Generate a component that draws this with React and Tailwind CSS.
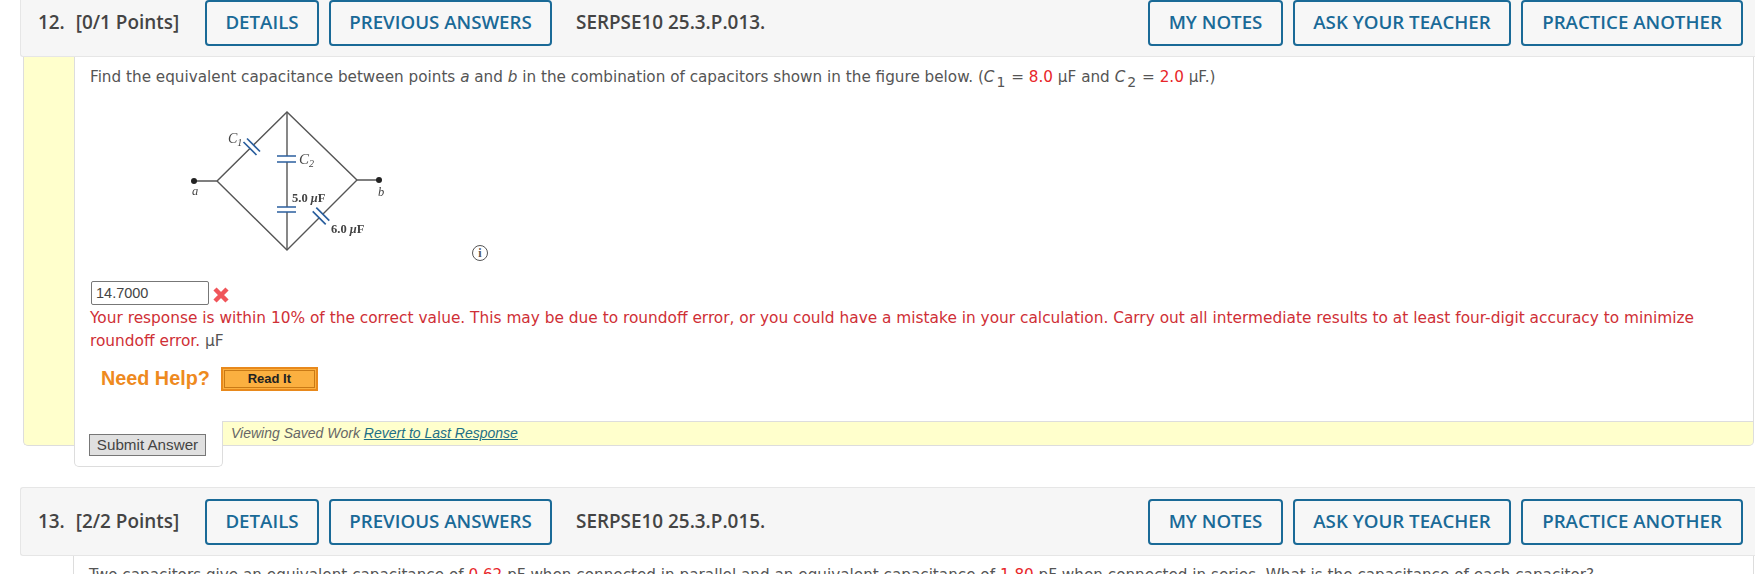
const btn = "h-[46px] flex items-center justify-center border-2 border-[#1a6a97] rounded-[4px] bg-[#f7f7f7] text-[#1a6a97] text-[18.7px] font-semibold whitespace-nowrap";

function Header({ num, points, code }) {
  return (
    <div className="ml-[20px] h-[69px] flex items-center bg-[#f6f6f6] border border-[#e6e6e6] border-r-0 rounded-l-[3px] font-['Open_Sans',sans-serif] text-[#444]">
      <div className="w-[184px] pl-[17px] text-[18.9px] font-semibold whitespace-nowrap">
        {num}. <span className="ml-[6px]">[{points} Points]</span>
      </div>
      <button className={`${btn} w-[114px]`}>DETAILS</button>
      <button className={`${btn} w-[223px] ml-[10px]`}>PREVIOUS ANSWERS</button>
      <div className="ml-[24px] text-[18.9px] font-semibold whitespace-nowrap">{code}</div>
      <div className="ml-auto mr-[12px] flex gap-[10px]">
        <button className={`${btn} w-[135px]`}>MY NOTES</button>
        <button className={`${btn} w-[218px]`}>ASK YOUR TEACHER</button>
        <button className={`${btn} w-[222px]`}>PRACTICE ANOTHER</button>
      </div>
    </div>
  );
}

function Circuit() {
  return (
    <svg width="240" height="160" viewBox="0 0 240 160" className="blur-[0.3px]">
      <g stroke="#555" strokeWidth="1.4" fill="none">
        <path d="M18 76H41L111 7L181 75H203" />
        <path d="M41 76L111 145L181 75" />
        <path d="M111 7V145" />
      </g>
      <circle cx="18" cy="76" r="3" fill="#222" />
      <circle cx="203" cy="75" r="3" fill="#222" />
      {/* white gaps between capacitor plates */}
      <g stroke="#fff" strokeWidth="3">
        <path d="M111 51V57" />
        <path d="M111 102V107" />
        <path d="M74 43.5L77.5 40" />
        <path d="M143.2 112.8L146.8 109.2" />
      </g>
      <g stroke="#2b5f9e" strokeWidth="1.7">
        <path d="M101 51H120M101 57H120" />
        <path d="M101 102H120M101 107H120" />
        <path d="M67.5 37L80.5 50M71 33.5L84 46.5" />
        <path d="M136.7 106.3L149.7 119.3M140.3 102.7L153.3 115.7" />
      </g>
      <g fontFamily="'Liberation Serif',serif" fontSize="12.5" fill="#444">
        <text x="16" y="90" fontStyle="italic">a</text>
        <text x="202" y="91" fontStyle="italic">b</text>
        <text x="52" y="38" fontStyle="italic" fontSize="14">C<tspan fontSize="10" dy="3">1</tspan></text>
        <text x="123" y="59" fontStyle="italic" fontSize="15">C<tspan fontSize="10" dy="3">2</tspan></text>
        <text x="116" y="97" fontWeight="bold">5.0 <tspan fontStyle="italic">μ</tspan>F</text>
        <text x="155" y="128" fontWeight="bold">6.0 <tspan fontStyle="italic">μ</tspan>F</text>
      </g>
    </svg>
  );
}

function Sub({ children }) {
  return <span className="italic">C<sub className="not-italic text-[14px] relative top-[5px] align-baseline ml-[2px] mr-[1px]">{children}</sub></span>;
}

export default function App() {
  return (
    <div className="h-[574px] overflow-hidden bg-white">
      <div className="-mt-[12px] font-['DejaVu_Sans',sans-serif] text-[15.22px] text-[#555]">
        <Header num="12" points="0/1" code="SERPSE10 25.3.P.013." />

        <div className="ml-[23px] mr-[1px] flex">
          <div className="w-[51px] h-[389px] bg-[#ffffcc] border-l border-b border-[#ddd] rounded-bl-[5px]"></div>
          <div className="flex-1 min-w-0">
            <div className="h-[364px] bg-white border-l border-r border-[#ddd] pl-[15px] pt-[10px]">
              <div className="h-[20px] leading-[20px] whitespace-nowrap">
                Find the equivalent capacitance between points <i>a</i> and <i>b</i> in the combination of capacitors shown in the figure below. (<Sub>1</Sub> = <span className="text-[#e8262a]">8.0</span> μF and <Sub>2</Sub> = <span className="text-[#e8262a]">2.0</span> μF.)
              </div>
              <div className="flex h-[178px] items-end pl-[86px] pt-[18px]">
                <Circuit />
                <div className="ml-[56px] mb-[4px] w-[16px] h-[16px] rounded-full border border-[#555] flex items-center justify-center font-['Liberation_Serif',serif] text-[12px] font-bold leading-none">i</div>
              </div>
              <div className="mt-[16px] ml-[1px] flex items-center">
                <div className="w-[118px] h-[24px] border border-[#777] rounded-[2px] pl-[4px] leading-[22px] font-['Liberation_Sans',sans-serif] text-[14.5px] text-[#444]">14.7000</div>
                <svg width="18" height="18" viewBox="0 0 18 18" className="ml-[3px] mt-[4px]">
                  <path d="M3 3L15 15M15 3L3 15" stroke="#f0555a" strokeWidth="4.5" />
                </svg>
              </div>
              <div className="mt-[2px] leading-[23px] text-[15.36px] text-[#cf2f36]">
                <div className="whitespace-nowrap">Your response is within 10% of the correct value. This may be due to roundoff error, or you could have a mistake in your calculation. Carry out all intermediate results to at least four-digit accuracy to minimize</div>
                <div>roundoff error. <span className="text-[#555]">μF</span></div>
              </div>
              <div className="mt-[11px] ml-[11px] flex items-center font-['Liberation_Sans',sans-serif]">
                <span className="text-[19.8px] font-bold text-[#ee8a1e]">Need Help?</span>
                <button className="ml-[11px] w-[97px] h-[24px] border-2 border-[#e8891c] bg-[#fbb040] outline outline-1 outline-offset-[-4px] outline-[#c97a16] text-[13px] font-bold text-[#222] flex items-center justify-center">Read It</button>
              </div>
            </div>
            <div className="flex items-start font-['Liberation_Sans',sans-serif]">
              <div className="w-[149px] h-[46px] bg-white border-l border-r border-b border-[#ddd] rounded-b-[5px] pl-[14px] pt-[13px]">
                <button className="w-[117px] h-[22px] bg-[#e0e0e0] border border-[#777] text-[15.2px] leading-[20px] text-[#444] whitespace-nowrap">Submit Answer</button>
              </div>
              <div className="flex-1 h-[25px] bg-[#ffffcc] border-t border-r border-b border-[#ddd] rounded-br-[5px] pl-[8px] italic text-[14px] leading-[23px] text-[#666]">
                Viewing Saved Work <a className="text-[#1d6f86] underline">Revert to Last Response</a>
              </div>
            </div>
          </div>
        </div>

        <div className="mt-[20px]">
          <Header num="13" points="2/2" code="SERPSE10 25.3.P.015." />
          <div className="ml-[73px] mr-[1px] h-[40px] bg-white border-l border-r border-[#ddd] pl-[15px] pt-[9px] leading-[20px] whitespace-nowrap">
            Two capacitors give an equivalent capacitance of <span className="text-[#e8262a]">0.62</span> pF when connected in parallel and an equivalent capacitance of <span className="text-[#e8262a]">1.80</span> pF when connected in series. What is the capacitance of each capacitor?
          </div>
        </div>
      </div>
    </div>
  );
}
